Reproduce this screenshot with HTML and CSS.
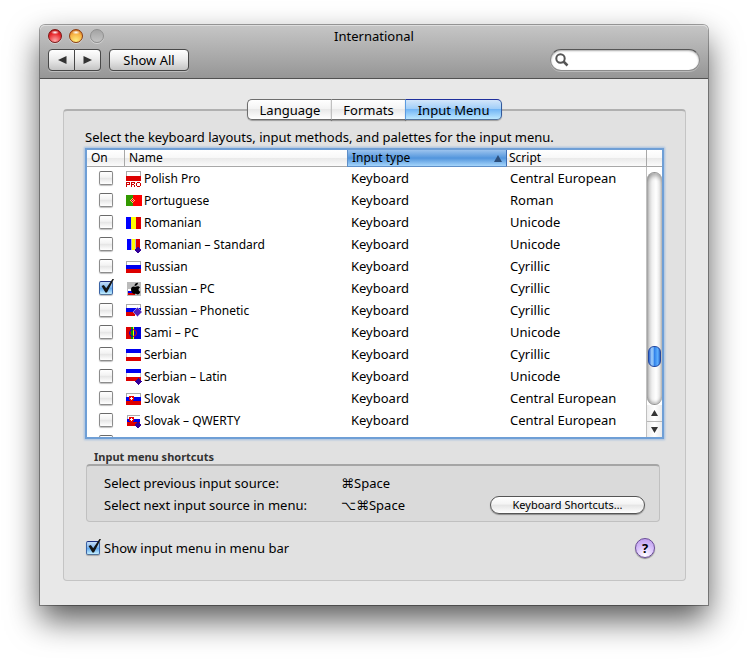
FILE: index.html
```html
<!DOCTYPE html>
<html lang="en">
<head>
<meta charset="utf-8">
<title>International</title>
<link rel="stylesheet" href="styles.css">
</head>
<body>
<main class="window">
  <header class="toolbar">
    <div class="titlebar">
      <div class="lights">
        <button class="light red" aria-label="Close"></button>
        <button class="light amber" aria-label="Minimize"></button>
        <button class="light off" aria-label="Zoom" disabled></button>
      </div>
      <h1 class="title">International</h1>
    </div>
    <div class="tools">
      <div class="nav">
        <button class="tool" aria-label="Back"><svg width="10" height="10" viewBox="0 0 10 10"><path d="M1 5 9.500 1v8z" fill="#333"/></svg></button>
        <button class="tool" aria-label="Forward"><svg width="10" height="10" viewBox="0 0 10 10"><path d="M9 5 .5 1v8z" fill="#333"/></svg></button>
      </div>
      <button class="tool show-all">Show All</button>
      <label class="search">
        <svg width="14" height="14" viewBox="0 0 14 14" fill="none" stroke="#555"><circle cx="5.5" cy="5.5" r="4.2" stroke-width="2"/><path d="m8.5 8.5 4 4" stroke-width="2.5"/></svg>
        <input type="text" aria-label="Search">
      </label>
    </div>
  </header>

  <section class="pane">
    <nav class="tabs">
      <button class="tab">Language</button>
      <button class="tab">Formats</button>
      <button class="tab active">Input Menu</button>
    </nav>
    <p class="intro">Select the keyboard layouts, input methods, and palettes for the input menu.</p>

    <div class="list">
      <table class="sources">
        <colgroup><col class="c-on"><col class="c-name"><col class="c-type"><col></colgroup>
        <thead>
          <tr><th>On</th><th>Name</th><th class="sorted"><span class="sort">Input type <svg width="8" height="7" viewBox="0 0 8 7"><path d="M4 0 8 7H0z" fill="#2c4f7c"/></svg></span></th><th>Script</th></tr>
        </thead>
        <tbody>
          <tr><td><input type="checkbox" id="s1"></td><td><label for="s1"><svg class="flag" viewBox="0 0 16 16" shape-rendering="crispEdges"><path fill="#aaa" d="M0 0h15v10H0z"/><path fill="#fff" d="M1 1h13v4H1z"/><path fill="#d00" d="M0 5h15v5H0z"/><path fill="#fff" d="M0 10h15v6H0z"/><path fill="#c00" d="M0 11h4v1H0zM0 12h1v4H0zM3 12h1v1H3zM1 13h3v1H1zM5 11h4v1H5zM5 12h1v4H5zM8 12h1v1H8zM6 13h2v1H6zM8 14h1v2H8zM11 11h3v1h-3zM10 12h1v3h-1zM14 12h1v3h-1zM11 15h3v1h-3z"/></svg>Polish Pro</label></td><td>Keyboard</td><td>Central European</td></tr>
          <tr><td><input type="checkbox" id="s2"></td><td><label for="s2"><svg class="flag" viewBox="0 0 16 16" shape-rendering="crispEdges"><path fill="#390" d="M0 2h7v11H0z"/><path fill="#f00" d="M7 2h9v11H7z"/><path fill="#fc6" d="M6 5h1v1H6zM4 7h1v1H4zM8 7h1v1H8zM6 9h1v1H6zM5 6h1v1H5zM7 6h1v1H7zM5 8h1v1H5zM7 8h1v1H7z"/><path fill="#ccf" d="M6 7h1v1H6z"/><path fill="#d00" d="M6 6h1v1H6zM5 7h1v1H5zM6 8h1v1H6z"/></svg>Portuguese</label></td><td>Keyboard</td><td>Roman</td></tr>
          <tr><td><input type="checkbox" id="s3"></td><td><label for="s3"><svg class="flag" viewBox="0 0 16 16" shape-rendering="crispEdges"><path fill="#00f" d="M0 2h5v12H0z"/><path fill="#ff0" d="M5 2h5v12H5z"/><path fill="#d00" d="M10 2h5v12h-5z"/></svg>Romanian</label></td><td>Keyboard</td><td>Unicode</td></tr>
          <tr><td><input type="checkbox" id="s4"></td><td><label for="s4"><svg class="flag" viewBox="0 0 16 16" shape-rendering="crispEdges"><path fill="#bbb" d="M1 2h13v12H1z"/><path fill="#fff" d="M1 13h13v1H1z"/><path fill="#00f" d="M1 2h4v11H1z"/><path fill="#ff0" d="M6 2h3v11H6z"/><path fill="#d00" d="M10 2h4v11h-4z"/><path fill="#309" d="M11 10h2v1h1v1h1v2h-1v1h-1v1h-2v-1h-1v-1H9v-2h1v-1h1z"/></svg>Romanian – Standard</label></td><td>Keyboard</td><td>Unicode</td></tr>
          <tr><td><input type="checkbox" id="s5"></td><td><label for="s5"><svg class="flag" viewBox="0 0 16 16" shape-rendering="crispEdges"><path fill="#aaa" d="M0 2h15v5H0z"/><path fill="#fff" d="M1 3h13v4H1z"/><path fill="#00e" d="M0 6h15v4H0z"/><path fill="#d00" d="M0 10h15v4H0z"/></svg>Russian</label></td><td>Keyboard</td><td>Cyrillic</td></tr>
          <tr><td><input type="checkbox" id="s6" checked></td><td><label for="s6"><svg class="flag" viewBox="0 0 16 16" shape-rendering="crispEdges"><path fill="#bbb" d="M1 1h14v14H1z"/><path fill="#fff" d="M2 8h7v2H2z"/><path fill="#00e" d="M2 10h7v2H2z"/><path fill="#d00" d="M2 12h7v2H2z"/><g shape-rendering="auto" fill="#000"><path d="M8.500 5C8.500 3 10 1.800 12 1.800 12 3.800 10.500 5 8.500 5z"/><path d="M9 6c1.500-1 4-1.200 5 .5-2 1-1.800 3.500.3 4.200C13.500 13 12 14 10.500 13c-.8-.5-1.500-.3-2.300 0C6.500 12.800 5 10.500 5 8.500 5 6 7 5 9 6z"/></g></svg>Russian – PC</label></td><td>Keyboard</td><td>Cyrillic</td></tr>
          <tr><td><input type="checkbox" id="s7"></td><td><label for="s7"><svg class="flag" viewBox="0 0 16 16" shape-rendering="crispEdges"><path fill="#aaa" d="M0 1h15v5H0z"/><path fill="#fff" d="M1 2h13v3H1z"/><path fill="#00e" d="M0 5h15v4H0z"/><path fill="#d00" d="M0 9h9v4H0z"/><path shape-rendering="auto" fill="#52b" stroke="#b8b0e8" stroke-width=".7" d="m11.500 4.500 4.500 4.500-4.500 4.500L7 9z"/></svg>Russian – Phonetic</label></td><td>Keyboard</td><td>Cyrillic</td></tr>
          <tr><td><input type="checkbox" id="s8"></td><td><label for="s8"><svg class="flag" viewBox="0 0 16 16" shape-rendering="crispEdges"><path fill="#d00" d="M0 2h5v12H0z"/><path fill="#090" d="M5 2h2v12H5z"/><path fill="#ff0" d="M7 2h1v12H7z"/><path fill="#00d" d="M8 2h7v12H8z"/><g shape-rendering="auto" fill="none"><path stroke="#00d" d="M7 4.500a3.500 3.500 0 0 0 0 7"/><path stroke="#e00" d="M7 4.500a3.500 3.500 0 0 1 0 7"/></g></svg>Sami – PC</label></td><td>Keyboard</td><td>Unicode</td></tr>
          <tr><td><input type="checkbox" id="s9"></td><td><label for="s9"><svg class="flag" viewBox="0 0 16 16" shape-rendering="crispEdges"><path fill="#00e" d="M0 2h15v4H0z"/><path fill="#ccc" d="M0 6h15v4H0z"/><path fill="#fff" d="M1 6h13v4H1z"/><path fill="#d00" d="M0 10h15v4H0z"/></svg>Serbian</label></td><td>Keyboard</td><td>Cyrillic</td></tr>
          <tr><td><input type="checkbox" id="s10"></td><td><label for="s10"><svg class="flag" viewBox="0 0 16 16" shape-rendering="crispEdges"><path fill="#00e" d="M0 0h15v4H0z"/><path fill="#ccc" d="M0 4h15v4H0z"/><path fill="#fff" d="M1 4h13v4H1z"/><path fill="#d00" d="M0 8h15v4H0z"/><path fill="#309" d="M12 9h1v1h1v1h1v1h1v1h-1v1h-1v1h-1v1h-1v-1h-1v-1h-1v-1H9v-1h1v-1h1v-1h1z"/></svg>Serbian – Latin</label></td><td>Keyboard</td><td>Unicode</td></tr>
          <tr><td><input type="checkbox" id="s11"></td><td><label for="s11"><svg class="flag" viewBox="0 0 16 16" shape-rendering="crispEdges"><path fill="#aaa" d="M0 2h15v4H0z"/><path fill="#fff" d="M1 3h13v3H1z"/><path fill="#00e" d="M0 6h15v4H0z"/><path fill="#d00" d="M0 10h15v4H0z"/><path fill="#e00" d="M3 5h5v4H7v1H4V9H3z"/><path fill="#fff" d="M5 6h1v1h1v1H6v1H5V8H4V7h1z"/></svg>Slovak</label></td><td>Keyboard</td><td>Central European</td></tr>
          <tr><td><input type="checkbox" id="s12"></td><td><label for="s12"><svg class="flag" viewBox="0 0 16 16" shape-rendering="crispEdges"><path fill="#aaa" d="M1 2h13v4H1z"/><path fill="#fff" d="M2 3h12v3H2z"/><path fill="#00e" d="M1 6h13v4H1z"/><path fill="#d00" d="M1 9h13v4H1z"/><path fill="#e00" d="M3 4h5v4H7v1H4V8H3z"/><path fill="#fff" d="M5 5h1v1h1v1H6v1H5V7H4V6h1z"/><path fill="#309" d="M11 9h2v1h1v1h1v2h-1v1h-1v1h-2v-1h-1v-1H9v-2h1v-1h1z"/></svg>Slovak – QWERTY</label></td><td>Keyboard</td><td>Central European</td></tr>
          <tr><td><input type="checkbox" aria-label="On"></td><td></td><td></td><td></td></tr>
        </tbody>
      </table>
      <div class="scroller">
        <div class="corner"></div>
        <div class="track"><div class="thumb"></div></div>
        <button class="arrow" aria-label="Scroll up"><svg width="7" height="6" viewBox="0 0 7 6"><path d="M3.500 0 7 6H0z" fill="#333"/></svg></button>
        <button class="arrow" aria-label="Scroll down"><svg width="7" height="6" viewBox="0 0 7 6"><path d="M3.500 6 7 0H0z" fill="#333"/></svg></button>
      </div>
    </div>

    <h2 class="group-title">Input menu shortcuts</h2>
    <div class="group">
      <dl class="keys">
        <dt>Select previous input source:</dt><dd>⌘Space</dd>
        <dt>Select next input source in menu:</dt><dd>⌥⌘Space</dd>
      </dl>
      <button class="pill">Keyboard Shortcuts…</button>
    </div>

    <footer class="foot">
      <label class="check"><input type="checkbox" checked>Show input menu in menu bar</label>
      <button class="help" aria-label="Help">?</button>
    </footer>
  </section>
</main>
</body>
</html>
```

FILE: styles.css
```css
* { box-sizing: border-box; }
body {
  margin: 0;
  padding: 25px 40px 54px;
  background: #fff;
  color: #000;
  font: 13px/16px "Noto Sans", "DejaVu Sans", sans-serif;
}
button, input { font: inherit; color: inherit; margin: 0; padding: 0; border: 0; }
svg { display: block; flex: none; }
h1, h2, p, dl, dd { margin: 0; }

.window {
  background: #e8e8e8;
  border-radius: 5px 5px 0 0;
  box-shadow: 0 0 0 1px rgba(0,0,0,.35), 0 15px 32px rgba(0,0,0,.65);
  padding-bottom: 24px;
}
.toolbar {
  height: 54px;
  border-bottom: 1px solid #515151;
  border-radius: 5px 5px 0 0;
  background: linear-gradient(#c6c6c6, #969696);
  box-shadow: inset 0 1px #dedede;
}
.titlebar {
  display: grid;
  grid-template-columns: 1fr auto 1fr;
  align-items: center;
  height: 22px;
  padding: 0 8px;
}
.lights { display: flex; gap: 7px; }
.light { width: 14px; height: 14px; border-radius: 50%; border: 1px solid #777; box-shadow: 0 1px rgba(255,255,255,.4); }
.red { border-color: #7c1614; background: radial-gradient(ellipse 4px 2px at 50% 20%, #fff, transparent), radial-gradient(circle at 50% 90%, #ffa9a9, #e8272c 60%, #a50f12); }
.amber { border-color: #8c3c10; background: radial-gradient(ellipse 4px 2px at 50% 20%, #fff, transparent), radial-gradient(circle at 50% 90%, #ffef80, #f7b042 60%, #b85210); }
.off { border-color: #909090; background: linear-gradient(#a4a4a4, #c4c4c4); }
.title { font-size: 13px; font-weight: 400; }

.tools { display: flex; align-items: center; padding: 0 8px; height: 26px; }
.nav { display: flex; margin-right: 8px; }
.tool {
  display: flex;
  align-items: center;
  justify-content: center;
  width: 27px;
  height: 22px;
  border: 1px solid #484848;
  border-radius: 4px;
  background: linear-gradient(#fff, #ececec 45%, #c4c4c4);
  box-shadow: 0 1px rgba(255,255,255,.35);
}
.nav .tool:first-child { border-radius: 4px 0 0 4px; }
.nav .tool:last-child { border-left: 0; width: 26px; border-radius: 0 4px 4px 0; }
.show-all { width: 80px; }
.search {
  display: flex;
  align-items: center;
  gap: 4px;
  width: 150px;
  height: 22px;
  margin-left: auto;
  padding: 0 8px 0 4px;
  border: 1px solid #8b8b8b;
  border-top-color: #555;
  border-radius: 11px;
  background: #fff;
  box-shadow: inset 0 1px 2px #aaa, 0 1px rgba(255,255,255,.3);
}
.search input { flex: 1; min-width: 0; background: none; outline: 0; }

.pane {
  margin: 30px 22px 0 23px;
  padding: 0 20px;
  border: 1px solid #c4c4c4;
  border-top: 2px solid #b0b0b0;
  border-radius: 4px;
  background: #e1e1e1;
}
.tabs { display: flex; justify-content: center; margin-top: -12px; }
.tab {
  height: 21px;
  padding: 0 12px;
  line-height: 18px;
  border: 1px solid #6d6d6d;
  border-left: 0;
  background: linear-gradient(#fff, #f3f3f3 48%, #e8e8e8 50%, #fff);
  box-shadow: 0 1px 1px rgba(0,0,0,.3);
}
.tab + .tab { padding: 0 11px; border-left: 1px solid #c0c0c0; margin-left: -1px; }
.tab:first-child { border-left: 1px solid #6d6d6d; border-radius: 5px 0 0 5px; border-right: 0; }
.tab.active {
  padding: 0 12px;
  border-color: #1f2f9c #31589c #54749c #5b9be0;
  border-right-width: 1px;
  border-radius: 0 5px 5px 0;
  background: linear-gradient(#d3e6fa, #9fcdf8 48%, #72b5f5 50%, #bde8ff);
}
.intro { margin: 9px 0 5px; padding-left: 1px; }

.list {
  display: grid;
  grid-template-columns: 1fr 16px;
  grid-template-rows: 100%;
  height: 287px;
  margin: 0 3px;
  overflow: hidden;
  background: #fff;
  box-shadow: 0 0 0 2px #6f9fd6, 0 0 2px 3px #a3bfe0;
}
.sources { table-layout: fixed; width: 100%; border-collapse: separate; border-spacing: 0; align-self: start; }
.c-on { width: 37px; }
.c-name { width: 223px; }
.c-type { width: 159px; }
th, .corner {
  height: 17px;
  padding: 0 0 0 4px;
  border-bottom: 1px solid #a8a8a8;
  background: linear-gradient(#fff, #f8f8f8 48%, #e9e9e9 50%, #fbfbfb);
}
th { font-size: 12px; line-height: 16px; font-weight: 400; text-align: left; }
th + th { border-left: 1px solid #a8a8a8; }
th:last-child { padding-left: 2px; }
th.sorted { border-color: #5f8fc8; background: linear-gradient(#9cc3ee, #5b9bdf 45%, #5194dc 50%, #a5d5fb); }
th.sorted + th { border-left-color: #3c6cb4; }
.sort { display: flex; justify-content: space-between; align-items: center; padding-right: 4px; }
td { height: 22px; padding: 0 0 0 4px; line-height: 20px; vertical-align: middle; white-space: nowrap; }
td:first-child { padding-left: 12px; }
td:nth-child(2) { padding-left: 2px; font-size: 12px; }
td label { display: flex; align-items: center; gap: 2px; padding-top: 1px; }
.flag { width: 16px; height: 16px; }

input[type="checkbox"] {
  appearance: none;
  display: block;
  position: relative;
  flex: none;
  width: 14px;
  height: 14px;
  border: 1px solid #8c8c8c;
  border-top-color: #6a6a6a;
  border-radius: 2px;
  background: linear-gradient(#fff, #f2f2f2 45%, #e4e4e4 50%, #fff);
  box-shadow: 0 1px 1px rgba(0,0,0,.25);
}
input[type="checkbox"]:checked {
  border-color: #1d2f80 #3a63a4 #54749c;
  background: linear-gradient(#c4ddf7, #82b8f0 45%, #5ca3ec 50%, #c4efff);
}
input[type="checkbox"]:checked::after {
  content: "";
  position: absolute;
  left: 1px;
  top: -3px;
  width: 13px;
  height: 14px;
  background: #151515;
  clip-path: polygon(4% 50%, 22% 42%, 40% 66%, 88% 0, 100% 0, 46% 96%, 34% 96%);
}

.scroller { display: flex; flex-direction: column; min-height: 0; border-left: 1px solid #c0c0c0; }
.corner { flex: none; margin-left: -1px; padding: 0; border-left: 1px solid #a8a8a8; }
.track {
  flex: 1;
  display: flex;
  flex-direction: column;
  margin-top: 5px;
  padding: 173px 1px 0;
  border-top: 1px solid #909090;
  border-bottom: 1px solid #909090;
  border-radius: 8px;
  background: linear-gradient(90deg, #c9c9c9, #f0f0f0 35%, #fff 60%, #e3e3e3);
  box-shadow: inset 0 3px 4px rgba(0,0,0,.3), inset 0 -2px 3px rgba(0,0,0,.2);
}
.thumb {
  flex: none;
  height: 21px;
  border: 1px solid #2348a0;
  border-radius: 6px;
  background: linear-gradient(90deg, #2a64d0, #9ccbfa 25%, #7fb8f6 40%, #2b7be6 45%, #5fb0ff 80%, #2764c8);
}
.arrow {
  display: flex;
  flex: none;
  align-items: center;
  justify-content: center;
  height: 16px;
  background: linear-gradient(90deg, #eee, #fff 50%, #ebebeb);
}
.arrow + .arrow { border-top: 1px solid #b8b8b8; }

.group-title { margin: 13px 0 0; padding-left: 10px; font-size: 11px; line-height: 14px; font-weight: 700; color: #333; }
.group {
  display: flex;
  align-items: flex-end;
  justify-content: space-between;
  margin: 0 5px 0 2px;
  padding: 6px 14px 5px 17px;
  border: 1px solid #c0c0c0;
  border-top: 2px solid #a5a5a5;
  border-radius: 4px;
  background: #dadada;
}
.keys { display: grid; grid-template-columns: 237px auto; line-height: 22px; }
.pill {
  width: 155px;
  height: 18px;
  margin-bottom: 2px;
  border: 1px solid #555;
  border-radius: 9px;
  background: linear-gradient(#fff, #f4f4f4 45%, #e4e4e4 50%, #fff);
  box-shadow: 0 1px 1px rgba(0,0,0,.35);
  font-size: 11px;
  line-height: 16px;
}
.foot { display: flex; align-items: center; justify-content: space-between; padding: 16px 10px 22px 2px; }
.check { display: flex; align-items: center; gap: 4px; }
.help {
  width: 20px;
  height: 20px;
  border: 1px solid #6a4c98;
  border-radius: 50%;
  background: radial-gradient(circle at 50% 90%, #fff, #d9c2fa 50%, #b592ea);
  box-shadow: 0 1px 1px rgba(0,0,0,.4);
  font-weight: 700;
}
```
